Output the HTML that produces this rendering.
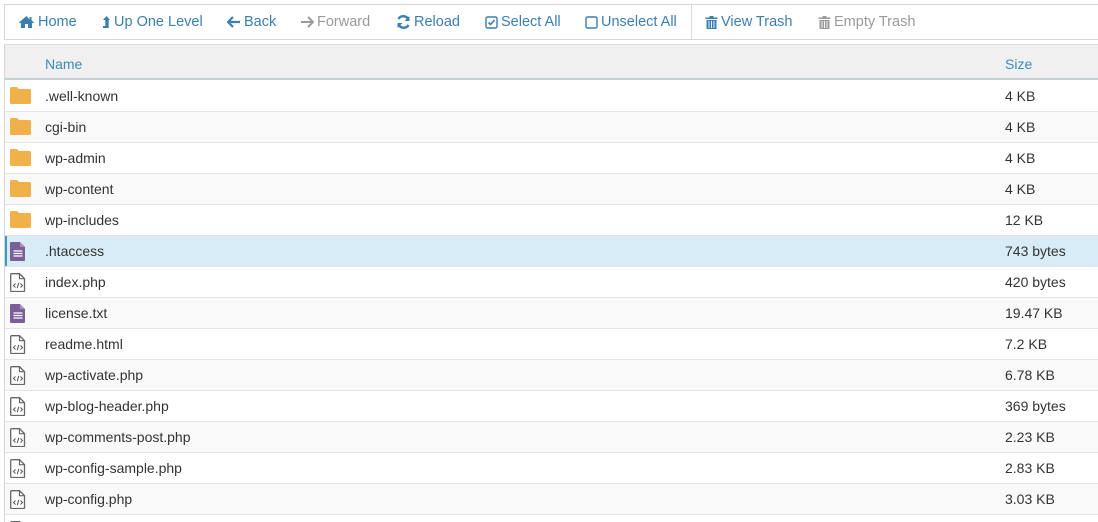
<!DOCTYPE html>
<html><head><meta charset="utf-8"><style>
html,body{margin:0;width:1098px;height:522px;overflow:hidden}
body{background:#fff;font-family:"Liberation Sans",sans-serif;position:relative}
.tb{position:absolute;left:4px;top:4px;width:1100px;height:34px;border:1px solid #d6d6d6;border-right:none;background:#fff}
.tb span{position:absolute;top:9px;font-size:14.5px;color:#3a7fb0;white-space:nowrap;display:flex;align-items:center;gap:3px}
.tb span.dis{color:#9a9a9a}
.tb svg{display:block}
.sep{position:absolute;left:686px;top:0;width:1px;height:34px;background:#ddd}
.tbl{position:absolute;left:4px;top:44px;width:1100px;height:480px;border-left:1px solid #d6d6d6}
.hd{position:absolute;left:0;top:0;width:1100px;height:36px;background:#f0f0f0;border-top:1px solid #ddd;border-bottom:2px solid #c5cfd6;box-sizing:border-box}
.hd b{position:absolute;top:11px;font-weight:normal;font-size:14px;color:#3d8ac0}
.row{position:absolute;left:0;width:1100px;height:31px;border-bottom:1px solid #e4e4e4;box-sizing:border-box;font-size:14px;color:#333}
.row.alt{background:#f9f9f9}
.row.sel{background:#d7ecf6;box-shadow:inset 2px 0 0 #3d9bb5}
.row .n{position:absolute;left:40px;top:7px}
.row .s{position:absolute;left:1000px;top:7px}
.row svg{position:absolute;left:5px;top:6px}
</style></head><body>
<div class="tb">
<span style="left:13px"><svg width="17" height="14" viewBox="0 0 17 14"><path d="M8.5 1L1 7.5l1 1L3 7.6V13h4V9h3v4h4V7.6l1 .9 1-1-2.5-2.2V2h-2v2.5z" fill="#3a7fb0"/></svg>Home</span>
<span style="left:97px"><svg width="9" height="15" viewBox="0 0 9 15"><path d="M4.5 1L1 5h2.3v6H1v2h5.7V5H8z" fill="#3a7fb0"/></svg>Up One Level</span>
<span style="left:222px"><svg width="14" height="12" viewBox="0 0 14 12"><path d="M6 1L1 6l5 5M1 6h12" stroke="#3a7fb0" stroke-width="2.2" fill="none"/></svg>Back</span>
<span class="dis" style="left:295px"><svg width="14" height="12" viewBox="0 0 14 12"><path d="M8 1l5 5-5 5M13 6H1" stroke="#9a9a9a" stroke-width="2" fill="none"/></svg>Forward</span>
<span style="left:391px"><svg width="15" height="14" viewBox="0 0 15 14"><path d="M12.5 5A5.5 5.5 0 0 0 2.5 4M2.5 9a5.5 5.5 0 0 0 10 1" stroke="#3a7fb0" stroke-width="2.4" fill="none"/><path d="M13.5 1v5h-5zM1.5 13V8h5z" fill="#3a7fb0"/></svg>Reload</span>
<span style="left:480px"><svg width="13" height="13" viewBox="0 0 13 13"><rect x="1" y="1" width="11" height="11" rx="1.5" stroke="#3a7fb0" stroke-width="1.4" fill="none"/><path d="M3.5 6.5l2 2 4-4.5" stroke="#3a7fb0" stroke-width="1.6" fill="none"/></svg>Select All</span>
<span style="left:580px"><svg width="13" height="13" viewBox="0 0 13 13"><rect x="1" y="1" width="11" height="11" rx="1.5" stroke="#3a7fb0" stroke-width="1.4" fill="none"/></svg>Unselect All</span>
<div class="sep"></div>
<span style="left:700px"><svg width="13" height="15" viewBox="0 0 13 15"><path d="M4.5 1h4v1.5h4v1.5H.5V2.5h4zM1.5 5h10v9h-10z" fill="#3a7fb0"/><path d="M4 6v7M6.5 6v7M9 6v7" stroke="#fff" stroke-width=".9"/></svg>View Trash</span>
<span class="dis" style="left:813px"><svg width="13" height="15" viewBox="0 0 13 15"><path d="M4.5 1h4v1.5h4v1.5H.5V2.5h4zM1.5 5h10v9h-10z" fill="#9a9a9a"/><path d="M4 6v7M6.5 6v7M9 6v7" stroke="#fff" stroke-width=".9"/></svg>Empty Trash</span>
</div>
<div class="tbl">
<div class="hd"><b style="left:40px">Name</b><b style="left:1000px">Size</b></div>
<div id="rows"></div>
</div>
<script>
var F='<svg width="21" height="17" viewBox="0 0 21 17"><path d="M0 1.5Q0 0 1.5 0H7l2 2h10.5Q21 2 21 3.5V15.5Q21 17 19.5 17h-18Q0 17 0 15.5z" fill="#f0b14a"/></svg>';
var T='<svg width="16" height="19" viewBox="0 0 16 19"><path d="M1 0h9l5 5v13a1 1 0 0 1-1 1H1a1 1 0 0 1-1-1V1a1 1 0 0 1 1-1z" fill="#7a5f98"/><path d="M10 0v5h5" fill="#a892bf"/><path d="M3.5 9h9M3.5 11.5h9M3.5 14h9" stroke="#fff" stroke-width="1.3"/></svg>';
var C='<svg width="16" height="19" viewBox="0 0 16 19"><path d="M1.5 .7h8l5 5v12a.8.8 0 0 1-.8.8H1.5a.8.8 0 0 1-.8-.8V1.5a.8.8 0 0 1 .8-.8z" fill="#fff" stroke="#666" stroke-width="1.3"/><path d="M9.5 .7v5h5" fill="none" stroke="#666" stroke-width="1.2"/><path d="M5.5 10.5l-2 2 2 2M10.5 10.5l2 2-2 2M8.8 9.8l-1.6 5.4" stroke="#555" stroke-width="1" fill="none"/></svg>';
var d=[[F,'.well-known','4 KB'],[F,'cgi-bin','4 KB'],[F,'wp-admin','4 KB'],[F,'wp-content','4 KB'],[F,'wp-includes','12 KB'],[T,'.htaccess','743 bytes'],[C,'index.php','420 bytes'],[T,'license.txt','19.47 KB'],[C,'readme.html','7.2 KB'],[C,'wp-activate.php','6.78 KB'],[C,'wp-blog-header.php','369 bytes'],[C,'wp-comments-post.php','2.23 KB'],[C,'wp-config-sample.php','2.83 KB'],[C,'wp-config.php','3.03 KB'],[C,'','']];
var h='';d.forEach(function(r,i){var c='row'+(i==5?' sel':(i%2?' alt':''));h+='<div class="'+c+'" style="top:'+(37+31*i)+'px">'+r[0]+'<span class="n">'+r[1]+'</span><span class="s">'+r[2]+'</span></div>';});
document.getElementById('rows').innerHTML=h;
</script>
</body></html>
